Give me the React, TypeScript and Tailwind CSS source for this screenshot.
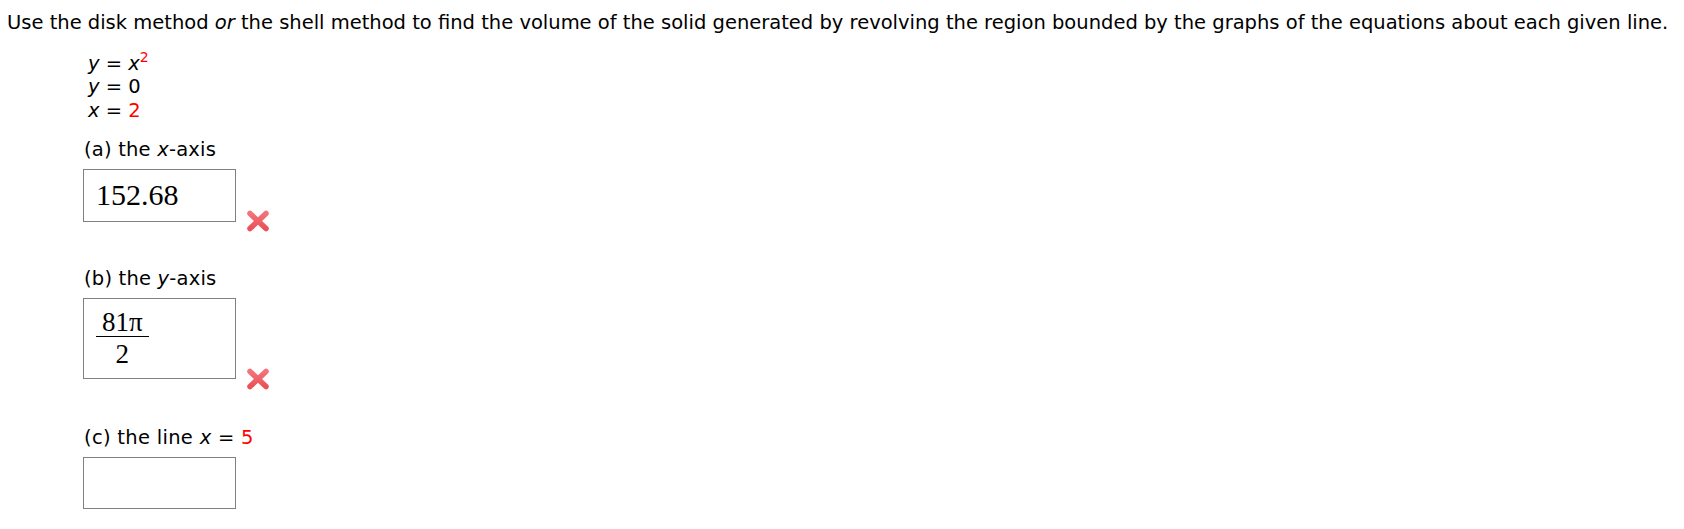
import React from "react";

function RedX() {
  return (
    <svg width="24" height="22" viewBox="0 0 24 22" className="block">
      <defs>
        <linearGradient id="xg" x1="0" y1="0" x2="0" y2="1">
          <stop offset="0" stopColor="#f4737a" />
          <stop offset="1" stopColor="#ec5058" />
        </linearGradient>
      </defs>
      <g stroke="url(#xg)" strokeWidth="5.5" strokeLinecap="round">
        <line x1="4" y1="3.5" x2="20" y2="18.5" />
        <line x1="20" y1="3.5" x2="4" y2="18.5" />
      </g>
    </svg>
  );
}

const serif = { fontFamily: '"Liberation Serif", "DejaVu Serif", serif' };

export default function App() {
  return (
    <div
      className="bg-white text-black min-h-[529px] w-[1684px] text-[19.5px] leading-[24px]"
      style={{ fontFamily: '"DejaVu Sans", Verdana, sans-serif' }}
    >
      <div className="pl-[7px] pt-[10.5px] whitespace-nowrap">
        Use the disk method <i>or</i> the shell method to find the volume of the solid generated by revolving the region bounded by the graphs of the equations about each given line.
      </div>

      <div className="pl-[88px] mt-[17px] flex flex-col leading-[23.5px]">
        <div>
          <i>y</i> = <i>x</i>
          <span className="relative -top-[8px] text-[14px] leading-none text-[#ff0000]">2</span>
        </div>
        <div>
          <i>y</i> = 0
        </div>
        <div>
          <i>x</i> = <span className="text-[#ff0000]">2</span>
        </div>
      </div>

      <div className="pl-[83px] mt-[15.5px]">
        <div className="pl-[1px] tracking-[0.2px]">
          (a) the <i>x</i>-axis
        </div>
        <div className="flex items-end mt-[7px] gap-[10px]">
          <div className="w-[153px] h-[53px] border border-[#808080] flex items-center pl-[12px]">
            <span className="text-[30px] leading-none" style={serif}>
              152.68
            </span>
          </div>
          <div className="mb-[-10.5px]">
            <RedX />
          </div>
        </div>
      </div>

      <div className="pl-[83px] mt-[45.5px]">
        <div className="pl-[1px] tracking-[0.2px]">
          (b) the <i>y</i>-axis
        </div>
        <div className="flex items-end mt-[7px] gap-[10px]">
          <div className="w-[153px] h-[81px] border border-[#808080] flex items-start pl-[12px] pt-[10px]">
            <div className="flex flex-col items-center text-[27px] leading-[27px]" style={serif}>
              <span className="px-[6px]">81π</span>
              <span className="block w-full h-px bg-black"></span>
              <span className="mt-[4px]">2</span>
            </div>
          </div>
          <div className="mb-[-10.5px]">
            <RedX />
          </div>
        </div>
      </div>

      <div className="pl-[83px] mt-[46.5px]">
        <div className="pl-[1px] tracking-[0.3px]">
          (c) the line <i>x</i> = <span className="text-[#ff0000]">5</span>
        </div>
        <div className="mt-[7px]">
          <div className="w-[153px] h-[52px] border border-[#808080]"></div>
        </div>
      </div>
    </div>
  );
}
